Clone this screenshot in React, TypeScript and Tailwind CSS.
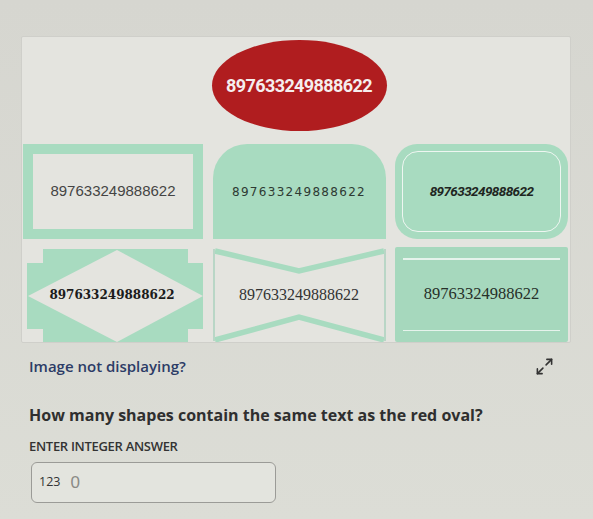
import React from 'react';
import { Maximize2 } from 'lucide-react';

const CODE = '897633249888622';
const GREEN = '#a8dbc0';
const PANEL = '#e4e4df';

const Cell: React.FC<{ children: React.ReactNode; art: React.ReactNode }> = ({ children, art }) => (
  <div className="relative h-[95px]">
    {art}
    <div className="relative h-full flex items-center justify-center">{children}</div>
  </div>
);

export default function App() {
  return (
    <div className="w-[593px] h-[519px] overflow-hidden bg-gradient-to-b from-[#d6d6d0] to-[#dcddd6] pt-[36px] pl-[21px] font-['Open_Sans',sans-serif]">
      {/* the picture */}
      <div className="w-[550px] h-[307px] bg-[#e4e4df] border border-[#cfcfca] rounded-[2px] pl-[1px] flex flex-col">
        <div className="h-[108px] flex justify-center pt-[3px]">
          <div className="w-[175px] h-[91px] rounded-[50%] bg-[#b01d1f] flex items-center justify-center ml-[5px]">
            <span className="text-[18px] font-bold tracking-[-0.6px] text-[#f5eeee] font-['Roboto',sans-serif]">{CODE}</span>
          </div>
        </div>

        <div className="grid grid-cols-[180px_173px_173px] gap-x-[9.5px] gap-y-[8px]">
          {/* plain frame */}
          <Cell art={<div className="absolute inset-0 border-[10px] border-[#a8dbc0]" />}>
            <span className="text-[15px] text-[#444] font-['Liberation_Sans',sans-serif]">{CODE}</span>
          </Cell>

          {/* rounded top */}
          <Cell art={<div className="absolute inset-0 bg-[#a8dbc0] rounded-t-[34px]" />}>
            <span className="text-[12px] tracking-[1.3px] text-[#2e3a33] font-['DejaVu_Sans',sans-serif]">{CODE}</span>
          </Cell>

          {/* rounded with inner outline */}
          <Cell
            art={
              <div className="absolute inset-0 bg-[#a8dbc0] rounded-[22px] p-[7px]">
                <div className="w-full h-full border-[1.5px] border-[#eef6f1] rounded-[16px]" />
              </div>
            }
          >
            <span className="text-[13.5px] font-bold italic tracking-[-0.6px] text-[#1e2622] font-['Roboto',sans-serif]">{CODE}</span>
          </Cell>

          {/* notched rect with diamond */}
          <Cell
            art={
              <svg className="absolute inset-0 w-full h-full" viewBox="0 0 180 95" preserveAspectRatio="none">
                <polygon
                  points="4,16 20,16 20,2 165,2 165,16 180,16 180,82 165,82 165,95 20,95 20,82 4,82"
                  fill={GREEN}
                />
                <polygon points="5,49 94,3 180,49 94,95" fill={PANEL} />
              </svg>
            }
          >
            <span className="text-[12px] font-bold text-[#1b1b1b] font-['DejaVu_Serif',serif] pr-[2px]">{CODE}</span>
          </Cell>

          {/* bow tie */}
          <Cell
            art={
              <svg className="absolute inset-0 w-full h-full" viewBox="0 0 173 95" preserveAspectRatio="none">
                <polyline points="2,4 86,24 171,4" fill="none" stroke={GREEN} strokeWidth="5.5" />
                <polyline points="2,93 86,70 171,93" fill="none" stroke={GREEN} strokeWidth="5.5" />
                <line x1="1" y1="2" x2="1" y2="94" stroke="#b9d6c6" strokeWidth="2" />
                <line x1="172" y1="2" x2="172" y2="94" stroke="#b9d6c6" strokeWidth="2" />
              </svg>
            }
          >
            <span className="text-[16px] text-[#333] font-['Liberation_Serif',serif]">{CODE}</span>
          </Cell>

          {/* striped */}
          <Cell
            art={
              <div className="absolute inset-0 bg-[#a6d8bd] rounded-[2px] px-[8px] py-[11px] flex flex-col justify-between">
                <div className="h-[1.5px] bg-[#e6f3ec]" />
                <div className="h-[1.5px] bg-[#e6f3ec]" />
              </div>
            }
          >
            <span className="text-[16.5px] text-[#263029] font-['Liberation_Serif',serif]">89763324988622</span>
          </Cell>
        </div>
      </div>

      {/* below the picture */}
      <div className="w-[550px] pl-[8px] pr-[17px]">
        <div className="flex items-center justify-between mt-[12px] h-[22px]">
          <span className="text-[15px] font-semibold text-[#2c3b66]">Image not displaying?</span>
          <Maximize2 className="w-[19px] h-[19px] text-[#333]" strokeWidth={2} />
        </div>

        <p className="mt-[27px] text-[16px] font-bold text-[#2f2f2f] leading-[22px]">
          How many shapes contain the same text as the red oval?
        </p>

        <p className="mt-[12px] text-[13px] font-semibold text-[#333] tracking-[-0.3px] uppercase leading-[16px]">
          Enter integer answer
        </p>

        <div className="mt-[8px] ml-[2px] w-[245px] h-[41px] border border-[#9b9b97] rounded-[6px] bg-[#e3e4de] flex items-center pl-[7px] gap-[10px]">
          <span className="text-[12.5px] text-[#333]">123</span>
          <span className="text-[17px] text-[#8a8a86] font-['Liberation_Sans',sans-serif]">0</span>
        </div>
      </div>
    </div>
  );
}
